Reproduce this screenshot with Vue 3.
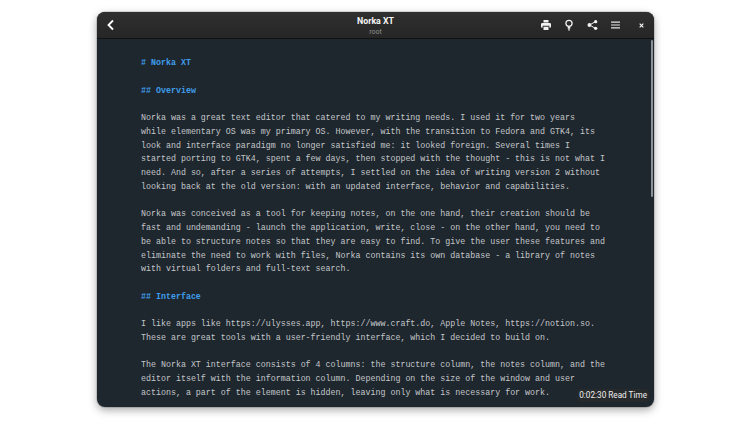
<script setup>
const blocks = [
  { h: true, t: '# Norka XT' },
  { h: true, t: '## Overview' },
  { t: ['Norka was a great text editor that catered to my writing needs. I used it for two years','while elementary OS was my primary OS. However, with the transition to Fedora and GTK4, its','look and interface paradigm no longer satisfied me: it looked foreign. Several times I','started porting to GTK4, spent a few days, then stopped with the thought - this is not what I','need. And so, after a series of attempts, I settled on the idea of writing version 2 without','looking back at the old version: with an updated interface, behavior and capabilities.'] },
  { t: ['Norka was conceived as a tool for keeping notes, on the one hand, their creation should be','fast and undemanding - launch the application, write, close - on the other hand, you need to','be able to structure notes so that they are easy to find. To give the user these features and','eliminate the need to work with files, Norka contains its own database - a library of notes','with virtual folders and full-text search.'] },
  { h: true, t: '## Interface' },
  { t: ['I like apps like https://ulysses.app, https://www.craft.do, Apple Notes, https://notion.so.','These are great tools with a user-friendly interface, which I decided to build on.'] },
  { t: ['The Norka XT interface consists of 4 columns: the structure column, the notes column, and the','editor itself with the information column. Depending on the size of the window and user','actions, a part of the element is hidden, leaving only what is necessary for work.'] },
]
</script>

<template>
  <div class="page">
    <div class="window">
      <header class="bar">
        <button class="ib back" aria-label="Back">
          <svg width="16" height="16" viewBox="0 0 16 16"><path d="M10 3.500 5.500 8l4.500 4.500" fill="none" stroke="#fff" stroke-width="1.800"/></svg>
        </button>
        <div class="title">
          <div class="t1">Norka XT</div>
          <div class="t2">root</div>
        </div>
        <div class="tools">
          <button class="ib" aria-label="Print">
            <svg width="10" height="10" viewBox="0 0 12 12"><path d="M3 0h6v3H3zM1.500 3.500h9A1.500 1.500 0 0 1 12 5v4h-2V7H2v2H0V5a1.500 1.500 0 0 1 1.500-1.500zM3 8h6v4H3z" fill="#f2f2f2"/></svg>
          </button>
          <button class="ib" aria-label="Ideas">
            <svg width="10" height="12" viewBox="0 0 12 14"><circle cx="6" cy="5" r="3.700" fill="none" stroke="#f2f2f2" stroke-width="1.500"/><path d="M4.500 9h3v2.500h-3zM5 12h2v1.500H5z" fill="#f2f2f2"/></svg>
          </button>
          <button class="ib" aria-label="Share">
            <svg width="11" height="10" viewBox="0 0 12 12"><path d="M9.500 2 2.500 6l7 4" fill="none" stroke="#f2f2f2" stroke-width="1.200"/><circle cx="9.800" cy="2" r="2" fill="#f2f2f2"/><circle cx="2.300" cy="6" r="2.300" fill="#f2f2f2"/><circle cx="9.800" cy="10" r="2" fill="#f2f2f2"/></svg>
          </button>
          <button class="ib" aria-label="Menu">
            <svg width="9" height="8" viewBox="0 0 10 9"><path d="M0 .5h10v1.400H0zM0 3.800h10v1.400H0zM0 7.100h10v1.400H0z" fill="#e8e8e8"/></svg>
          </button>
          <button class="ib close" aria-label="Close">
            <svg width="5" height="5" viewBox="0 0 6 6"><path d="M.8.800l4.400 4.400M5.200.800.800 5.200" stroke="#fff" stroke-width="1.300"/></svg>
          </button>
        </div>
      </header>
      <main class="content">
        <template v-for="(b, i) in blocks" :key="i">
          <p v-if="b.h" class="head">{{ b.t }}</p>
          <p v-else class="para"><span v-for="(l, j) in b.t" :key="j" class="line">{{ l }}</span></p>
        </template>
        <div class="scroll"></div>
        <div class="time">0:02:30 Read Time</div>
      </main>
    </div>
  </div>
</template>

<style>
html, body { margin: 0; background: #fff; }
</style>

<style scoped>
.page { width: 752px; height: 423px; box-sizing: border-box; padding: 12px 98px 16px 97px; overflow: hidden; }
.window { height: 395px; border-radius: 8px; overflow: hidden; display: flex; flex-direction: column; background: #1e262e; box-shadow: 0 3px 9px rgba(0,0,0,.35), 0 0 0 1px rgba(0,0,0,.12); }
.bar { height: 26px; flex: none; display: flex; align-items: center; justify-content: space-between; position: relative; background: linear-gradient(#2f2f2f, #262626); border-bottom: 1px solid #111; padding: 0 5px 0 6px; }
.ib { border: 0; padding: 0; background: none; display: flex; align-items: center; justify-content: center; width: 16px; height: 16px; }
.title { position: absolute; left: 0; right: 0; top: 3.500px; text-align: center; font-family: Roboto, "Liberation Sans", sans-serif; }
.t1 { font-size: 8.800px; font-weight: 700; line-height: 11px; color: #f4f4f4; }
.t2 { font-size: 7px; line-height: 10px; color: #8e8e8e; }
.tools { display: flex; align-items: center; gap: 7px; position: relative; }
.close { margin-left: 3px; }
.content { flex: 1; min-height: 0; position: relative; overflow: hidden; padding: 17.300px 0 0 44px; font-family: "Liberation Mono", monospace; font-size: 8.320px; line-height: 13.730px; color: #c4c7ca; }
p { margin: 0 0 13.730px; white-space: pre; }
.head { color: #3f9eea; font-weight: 700; }
.line { display: block; }
.scroll { position: absolute; right: 1px; top: 1px; width: 2px; height: 157px; border-radius: 1px; background: #8b9095; }
.time { position: absolute; right: 5px; bottom: 5px; padding: 0 2px 0 2px; height: 13px; line-height: 13px; background: #272a2c; border-radius: 3px; color: #f0f0f0; font-family: Roboto, sans-serif; font-size: 8.200px; }
</style>
